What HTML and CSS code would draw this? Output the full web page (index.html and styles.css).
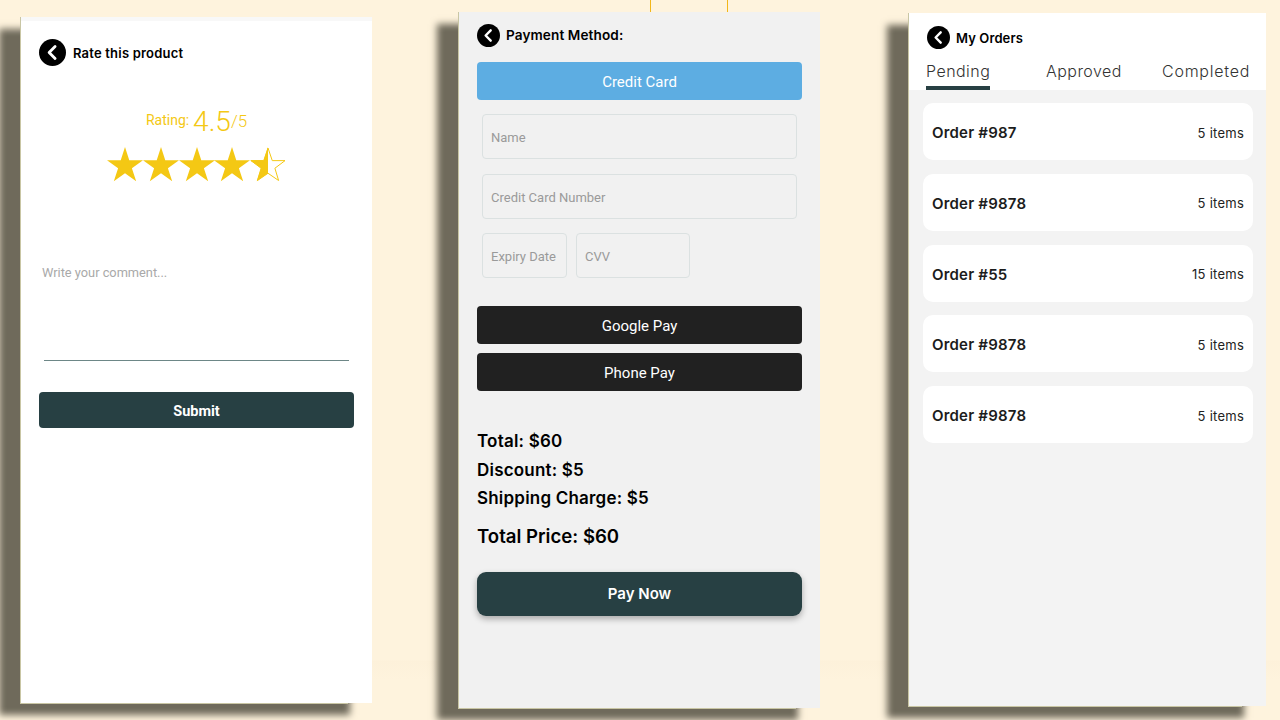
FILE: index.html
```html
<!DOCTYPE html>
<html lang="en">
<head>
<meta charset="utf-8">
<title>Mobile screens</title>
<link rel="stylesheet" href="styles.css">
</head>
<body>
<svg class="defs" aria-hidden="true">
  <symbol id="back" viewBox="0 0 24 24">
    <circle cx="12" cy="12" r="12" fill="#000"/>
    <path d="M14.3 6.6 9 12l5.3 5.4" fill="none" stroke="#fff" stroke-width="2.5" stroke-linecap="round" stroke-linejoin="round"/>
  </symbol>
  <symbol id="star" viewBox="0 0 36 35">
    <polygon points="18,0 22.27,13.13 36,13.13 24.9,21.24 29.17,34.37 18,26.26 6.83,34.37 11.1,21.24 0,13.13 13.73,13.13"/>
  </symbol>
  <symbol id="half" viewBox="0 0 36 35">
    <polygon class="half-line" points="18,1 22.27,13.63 35,13.63 24.9,21.24 28.6,33.5 18,26.26 7.4,33.5 11.1,21.24 1,13.63 13.73,13.63"/>
    <polygon points="18,0 18,26.26 6.83,34.37 11.1,21.24 0,13.13 13.73,13.13"/>
  </symbol>
</svg>

<div class="deco deco-a"></div>
<div class="deco deco-b"></div>

<section class="screen rate">
  <header class="head head-lg">
    <svg class="back"><use href="#back"/></svg>
    <h1>Rate this product</h1>
  </header>
  <p class="rating"><span class="label">Rating:</span> <span class="score">4.5</span><span class="max">/5</span></p>
  <div class="stars">
    <svg class="star"><use href="#star"/></svg>
    <svg class="star"><use href="#star"/></svg>
    <svg class="star"><use href="#star"/></svg>
    <svg class="star"><use href="#star"/></svg>
    <svg class="star"><use href="#half"/></svg>
  </div>
  <textarea class="comment" placeholder="Write your comment..."></textarea>
  <div class="rule"></div>
  <button class="submit">Submit</button>
</section>

<section class="screen pay">
  <header class="head head-pay">
    <svg class="back"><use href="#back"/></svg>
    <h1>Payment Method:</h1>
  </header>
  <button class="btn btn-blue">Credit Card</button>
  <form class="fields">
    <input class="field" placeholder="Name">
    <input class="field" placeholder="Credit Card Number">
    <div class="field-row">
      <input class="field expiry" placeholder="Expiry Date">
      <input class="field cvv" placeholder="CVV">
    </div>
  </form>
  <button class="btn btn-dark first-dark">Google Pay</button>
  <button class="btn btn-dark second-dark">Phone Pay</button>
  <div class="totals">
    <p>Total: $60</p>
    <p>Discount: $5</p>
    <p>Shipping Charge: $5</p>
  </div>
  <p class="grand">Total Price: $60</p>
  <button class="pay-now">Pay Now</button>
</section>

<section class="screen orders">
  <div class="orders-top">
    <header class="head">
      <svg class="back"><use href="#back"/></svg>
      <h1>My Orders</h1>
    </header>
    <nav class="tabs">
      <span class="tab active">Pending</span>
      <span class="tab">Approved</span>
      <span class="tab">Completed</span>
    </nav>
  </div>
  <div class="cards">
    <div class="card"><strong>Order #987</strong><span>5 items</span></div>
    <div class="card"><strong>Order #9878</strong><span>5 items</span></div>
    <div class="card"><strong>Order #55</strong><span>15 items</span></div>
    <div class="card"><strong>Order #9878</strong><span>5 items</span></div>
    <div class="card"><strong>Order #9878</strong><span>5 items</span></div>
  </div>
</section>
</body>
</html>
```
FILE: styles.css
```css
* { box-sizing: border-box; }
html, body { margin: 0; height: 100%; }
body {
  position: relative;
  width: 1280px;
  height: 720px;
  overflow: hidden;
  background: linear-gradient(#fef3dd 0, #fef3dd 660px, #fdf1da 661px, #fef3dd 680px);
  font-family: Roboto, "Liberation Sans", sans-serif;
}
.defs { position: absolute; width: 0; height: 0; }
.deco { position: absolute; top: 0; width: 1px; height: 12px; background: #f2b619; }
.deco-a { left: 650px; }
.deco-b { left: 727px; }

.screen {
  position: absolute;
  box-shadow: -1px 0 0 #c9c6a4, -22px 12px 7px #6f6a5b;
}
.screen::after {
  content: "";
  position: absolute;
  left: -1px;
  bottom: -1px;
  width: calc(100% - 23px);
  height: 1px;
  background: #c9c6a4;
}
.rate { left: 21px; top: 17px; width: 351px; height: 686px; padding: 18px 18px 0; background: #fff; border-top: 4px solid #f8f8f8; }
.pay { left: 459px; top: 12px; width: 361px; height: 696px; padding: 12px 18px 0; background: #f1f1f1; }
.orders { left: 909px; top: 13px; width: 357px; height: 693px; background: #f3f3f3; }

.head { display: flex; align-items: center; gap: 6px; height: 23px; }
.head h1 { margin: 0; font: 600 13px/18px Inter, sans-serif; color: #000; white-space: nowrap; letter-spacing: .1px; }
.back { width: 23px; height: 23px; flex: none; }
.head-lg { height: 27px; gap: 7px; }
.head-lg .back { width: 27px; height: 27px; }
.head-lg h1 { letter-spacing: .2px; }
.head-pay h1 { font-size: 13.6px; margin-top: -2px; }

.rating { margin: 39px 0 0; height: 30px; text-align: center; color: #f4c814; line-height: 30px; white-space: nowrap; }
.label { font-size: 14px; vertical-align: 6px; }
.score { font-size: 28px; font-weight: 300; }
.max { font-size: 17px; font-weight: 300; vertical-align: 4px; }
.stars { display: flex; justify-content: center; margin-top: 12px; height: 35px; }
.star { width: 36px; height: 35px; flex: none; fill: #f4c814; margin-right: -0.2px; }
.half-line { fill: #fff; stroke: #f4c814; stroke-width: 1; }
.comment {
  display: block; width: 100%; height: 98px; margin-top: 80px; padding: 1px 3px 0;
  border: 0; outline: 0; resize: none; background: transparent;
  font: 12.8px/20px Roboto, sans-serif;
}
.comment::placeholder { color: #a9a9a9; }
.rule { height: 1px; margin: 0 5px; background: #6d8787; }
.submit {
  display: block; width: 100%; height: 36px; margin-top: 31px; padding: 2px 0 0; border: 0; border-radius: 4px;
  background: #274043; color: #fff; font: 700 14.5px Roboto, sans-serif;
}

.btn { display: block; width: 100%; height: 38px; padding: 2px 0 0; border: 0; border-radius: 4px; color: #fff; font: 400 15px Roboto, sans-serif; }
.btn-blue { margin-top: 15px; background: #5dade2; }
.btn-dark { background: #212121; }
.first-dark { margin-top: 28px; }
.second-dark { margin-top: 9px; }
.fields { display: flex; flex-direction: column; gap: 15px; margin: 14px 5px 0; }
.field-row { display: flex; gap: 9px; margin-top: -1px; }
.field {
  display: block; width: 100%; height: 45px; padding: 1px 8px 0;
  border: 1px solid #dbe1e1; border-radius: 4px; background: transparent; outline: 0;
  font: 13px Roboto, sans-serif;
}
.field::placeholder { color: #9a9a9a; }
.field-row .expiry { width: 85px; }
.field-row .cvv { width: 114px; }
.totals { margin-top: 36px; font: 600 17px/28.5px Inter, sans-serif; color: #000; letter-spacing: .2px; }
.totals p { margin: 0; }
.grand { margin: 9px 0 0; font: 600 18.6px/28px Inter, sans-serif; color: #000; }
.pay-now {
  display: block; width: 100%; height: 44px; margin-top: 22px; border: 0; border-radius: 9px;
  background: #274043; color: #fff; font: 600 15px Inter, sans-serif;
  box-shadow: 0 3px 6px rgba(0, 0, 0, .3);
}

.orders-top { height: 77px; padding: 13px 0 0 18px; background: #fff; }
.tabs { display: grid; grid-template-columns: 120px 116px auto; margin: 7px 0 0 -1px; }
.tab { height: 34px; padding-top: 1px; font: 300 16px/28px Inter, sans-serif; color: #333; white-space: nowrap; letter-spacing: .45px; }
.tab:last-child { letter-spacing: .75px; }
.tab.active { width: 64px; border-bottom: 4px solid #274043; }
.cards { display: flex; flex-direction: column; gap: 13.75px; padding: 13px 13px 0 14px; }
.card {
  display: flex; align-items: center; justify-content: space-between;
  height: 57px; padding: 2px 9px 0; border-radius: 10px; background: #fff;
}
.card strong { font: 600 15px Inter, sans-serif; color: #1c1c1c; letter-spacing: .2px; }
.card span { font: 400 13px Inter, sans-serif; color: #222; letter-spacing: .25px; }
```
